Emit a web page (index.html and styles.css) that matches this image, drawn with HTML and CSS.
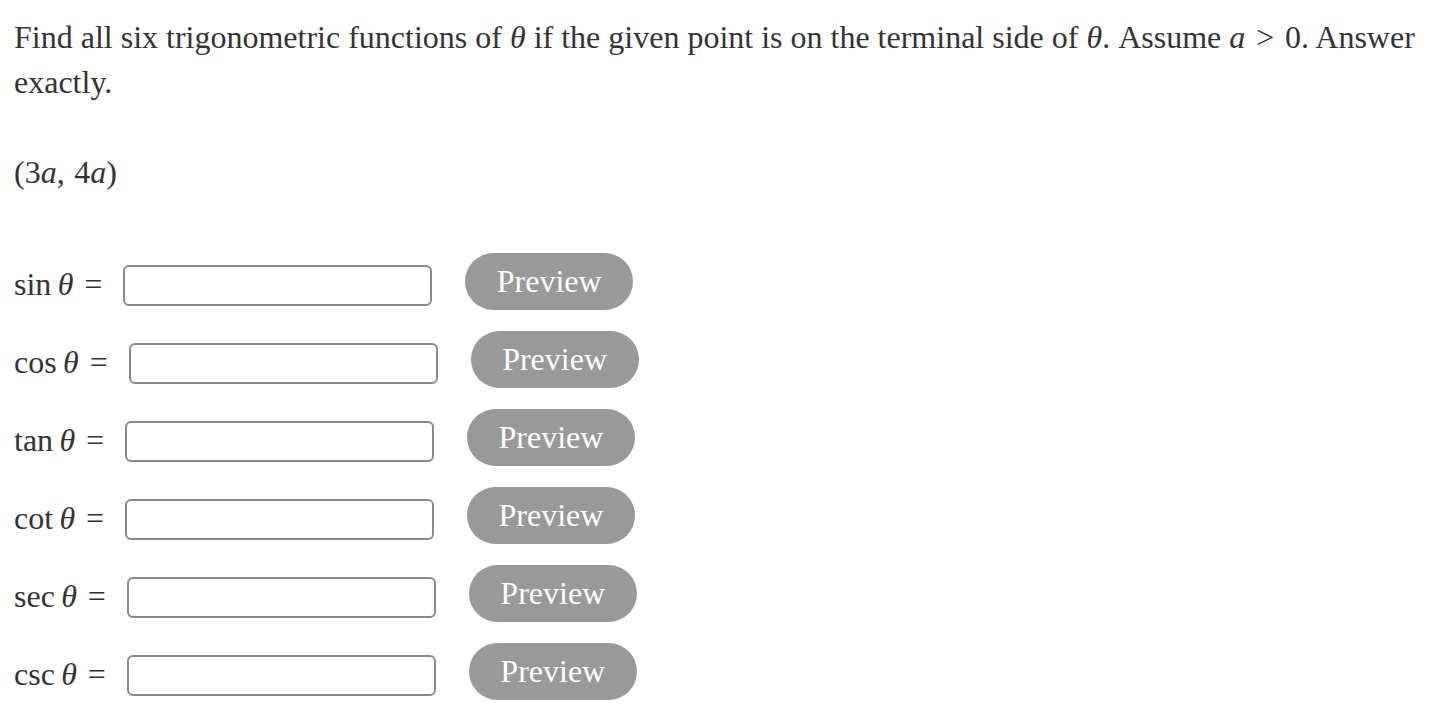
FILE: index.html
```html
<!DOCTYPE html>
<html>
<head>
<meta charset="utf-8">
<link rel="stylesheet" href="styles.css">
</head>
<body>
<div class="question">
  <p class="intro"><span>Find all six trigonometric functions of </span><span class="mi">θ</span><span> if the given point is on the terminal side of </span><span class="mi">θ</span><span>. Assume </span><span class="mi">a</span><span class="rel">&gt;</span><span>0. Answer</span> <span>exactly.</span></p>
  <p class="point">(3<span class="mi">a</span>,<span class="sp"></span>4<span class="mi">a</span>)</p>
  <div class="rows">
    <div class="row"><span class="label">sin<span class="thin"></span><span class="mi">θ</span><span class="rel">=</span></span><input class="answer" type="text"><button class="preview">Preview</button></div>
    <div class="row"><span class="label">cos<span class="thin"></span><span class="mi">θ</span><span class="rel">=</span></span><input class="answer" type="text"><button class="preview">Preview</button></div>
    <div class="row"><span class="label">tan<span class="thin"></span><span class="mi">θ</span><span class="rel">=</span></span><input class="answer" type="text"><button class="preview">Preview</button></div>
    <div class="row"><span class="label">cot<span class="thin"></span><span class="mi">θ</span><span class="rel">=</span></span><input class="answer" type="text"><button class="preview">Preview</button></div>
    <div class="row"><span class="label">sec<span class="thin"></span><span class="mi">θ</span><span class="rel">=</span></span><input class="answer" type="text"><button class="preview">Preview</button></div>
    <div class="row"><span class="label">csc<span class="thin"></span><span class="mi">θ</span><span class="rel">=</span></span><input class="answer" type="text"><button class="preview">Preview</button></div>
  </div>
</div>
</body>
</html>
```
FILE: styles.css
```css
html, body {
  margin: 0;
  padding: 0;
  background: #ffffff;
}
.question {
  padding: 15px 20px 0 14px;
  font-family: "Liberation Serif", "Times New Roman", serif;
  font-size: 32px;
  line-height: 45px;
  color: #333333;
}
.intro {
  margin: 0;
}
.mi {
  font-style: italic;
}
.rel {
  margin: 0 0.34em;
}
.sp {
  display: inline-block;
  width: 0.3em;
}
.thin {
  display: inline-block;
  width: 0.2em;
}
.point {
  margin: 45px 0 0 0;
}
.rows {
  margin-top: 58px;
  display: flex;
  flex-direction: column;
  gap: 21px;
}
.row {
  display: flex;
  align-items: center;
  height: 57px;
}
.label {
  white-space: nowrap;
  margin-right: 10px;
  position: relative;
  top: 3px;
}
.answer {
  box-sizing: border-box;
  width: 309px;
  height: 41px;
  margin: 8px 33px 0 0;
  border: 2px solid #8a8a8a;
  border-radius: 6px;
  background: #ffffff;
  padding: 0 8px;
  font-family: "Liberation Serif", serif;
  font-size: 24px;
  outline: none;
}
.preview {
  box-sizing: border-box;
  width: 168px;
  height: 57px;
  border: none;
  border-radius: 29px;
  background: #999999;
  color: #ffffff;
  font-family: "Liberation Serif", "Times New Roman", serif;
  font-size: 32px;
  padding: 0;
  cursor: pointer;
}
```
